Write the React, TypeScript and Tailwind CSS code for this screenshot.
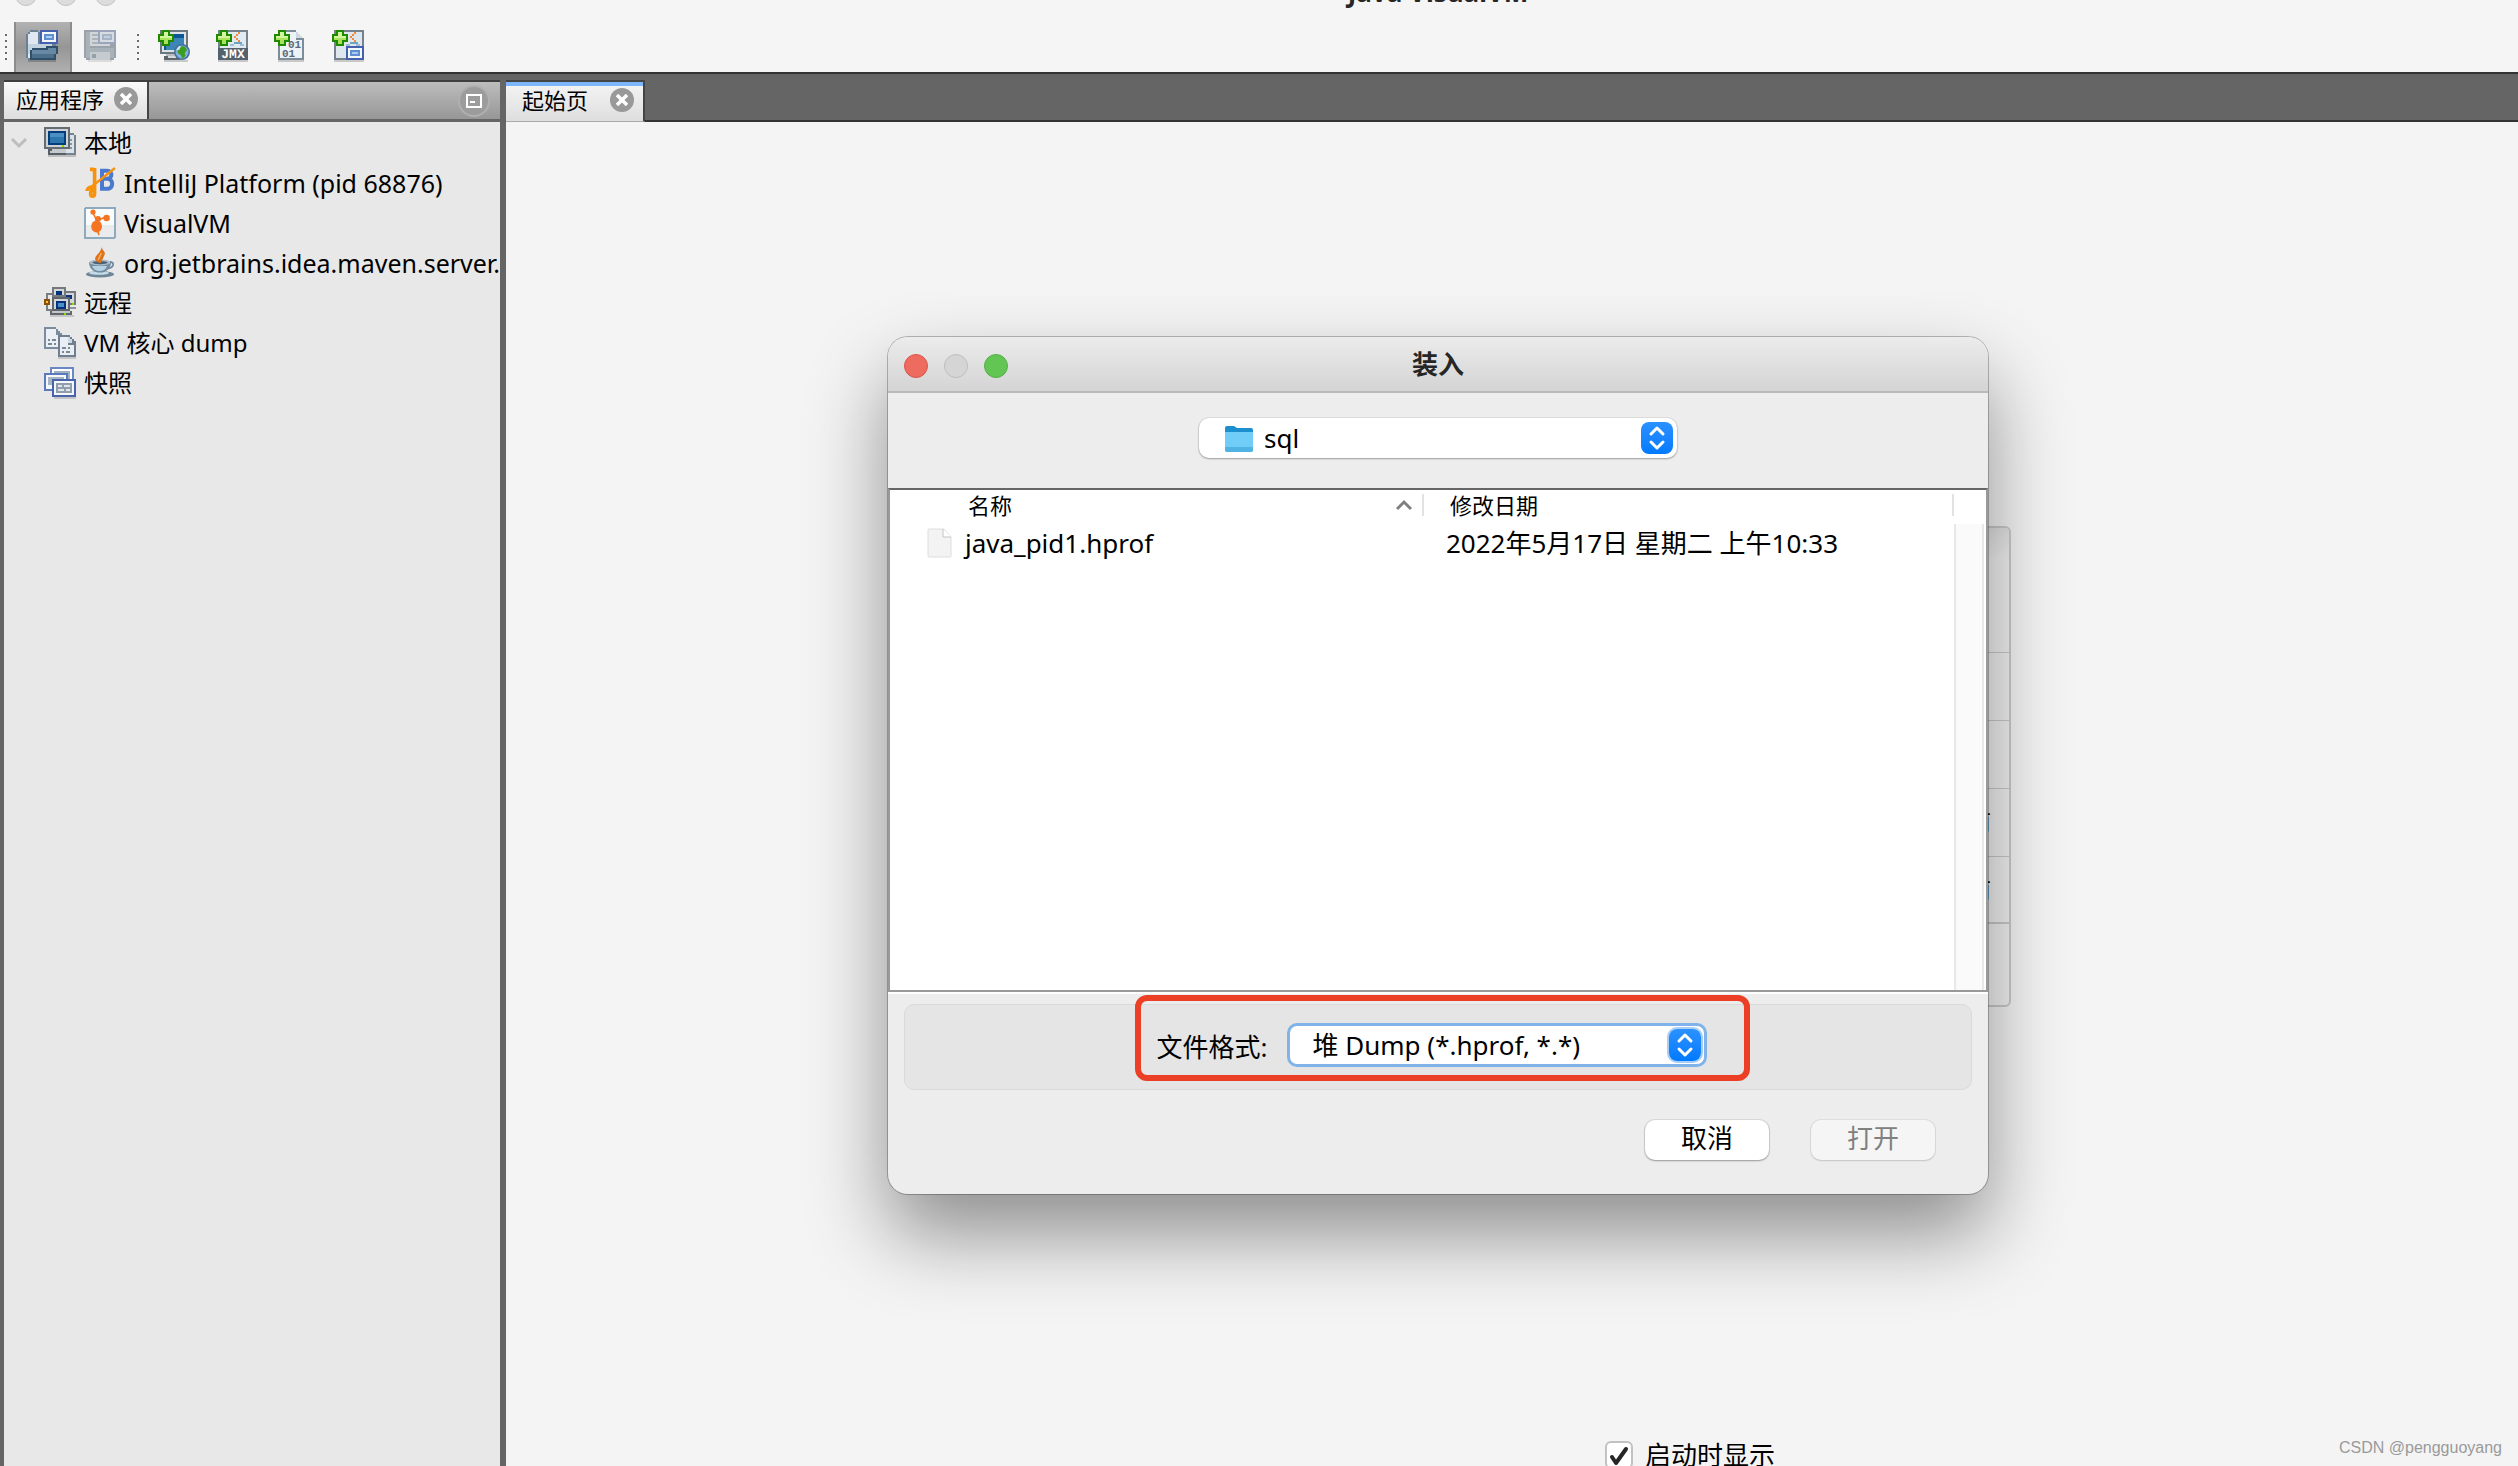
import React from 'react';

const LATIN = "font-['Noto_Sans','Noto_Sans_CJK_SC',sans-serif]";

function Icon({ children }: { children: React.ReactNode }) {
  return (
    <svg viewBox="0 0 16 16" className="size-8 shrink-0" shapeRendering="crispEdges" aria-hidden="true">
      {children}
    </svg>
  );
}

const Plus = () => (
  <>
    <path d="M2 0h4v2h2v4H6v2H2V6H0V2h2z" fill="#1f8a00" />
    <path d="M3 1h2v2h2v2H5v2H3V5H1V3h2z" fill="#a9e35c" />
    <path d="M3 1h2v2h2v1H1V3h2z" fill="#d3f5a0" />
  </>
);

const MiniWindow = ({ x, y }: { x: number; y: number }) => (
  <g>
    <rect x={x} y={y} width="9" height="7" fill="#4560ae" />
    <rect x={x + 1} y={y + 1} width="7" height="5" fill="#f4f8fd" />
    <rect x={x + 2} y={y + 2} width="5" height="3" fill="#5f8fd0" />
    <rect x={x + 3} y={y + 3} width="3" height="1" fill="#a9cdf0" />
  </g>
);

const OpenIcon = () => (
  <Icon>
    <rect x="1" y="15" width="14" height="1" fill="#000" opacity=".2" />
    <path d="M0 2h1V1h1V0h4v1h1v6h8v2h1v1h-1v4h-1v1H1v-1H0z" fill="#6b8193" />
    <path d="M1 2h1V1h4v6h6v1H2v6H1z" fill="#dfe8f0" />
    <path d="M1 7h12v2H3v3H1z" fill="#c3d2df" />
    <path d="M2 10h1V9h7V8h6v4h-1v3H2z" fill="#2f4f6a" />
    <path d="M3 10h8V9h4v3h-1v2H3z" fill="#6888a3" />
    <path d="M3 12h11v2H3z" fill="#4c6f8c" />
    <MiniWindow x={7} y={0} />
  </Icon>
);

const SaveIcon = () => (
  <Icon>
    <rect x="2" y="15" width="12" height="1" fill="#000" opacity=".1" />
    <path d="M0 0h16v14h-1v1H1v-1H0z" fill="#9aa3ab" />
    <path d="M1 1h2v8h12v5H1z" fill="#a9b2b9" />
    <rect x="3" y="1" width="10" height="7" fill="#d3d6d9" />
    <path d="M4 2h3v1H4zM4 4h3v1H4zM4 6h6v1H4z" fill="#adb3b8" />
    <rect x="3" y="11" width="10" height="4" fill="#c6cbcf" />
    <rect x="4" y="12" width="2" height="2" fill="#969fa6" />
    <rect x="7" y="0" width="9" height="7" fill="#9aa5bd" />
    <rect x="8" y="1" width="7" height="5" fill="#d8dce2" />
    <rect x="9" y="2" width="5" height="3" fill="#a5b3c6" />
    <rect x="10" y="3" width="3" height="1" fill="#c5d0dc" />
  </Icon>
);

const AddHostIcon = () => (
  <Icon>
    <rect x="3" y="15" width="12" height="1" fill="#000" opacity=".18" />
    <rect x="1" y="0" width="14" height="12" fill="#6d7880" />
    <rect x="2" y="1" width="12" height="10" fill="#dfe3e6" />
    <rect x="3" y="2" width="10" height="8" fill="#0c5796" />
    <path d="M6 4h7v6H4V8h2z" fill="#3b86b7" />
    <path d="M4 12h6v1H4z" fill="#b6bcc0" />
    <path d="M3 13h8v2H3z" fill="#5d666d" />
    <path d="M5 13h4v1H5z" fill="#d5d9dc" />
    <g shapeRendering="auto">
      <circle cx="12" cy="11" r="3.600" fill="#7fb2dd" stroke="#45709c" strokeWidth=".8" />
      <path d="M10 9.500l2-1.500 1.500.5 1 1.500-1.200 1.500.4 1.500-1.400 1.200-1-1.700-1.500-1z" fill="#3c9d1e" />
      <path d="M9.200 10l1.300-2 1 .3-1 1.700z" fill="#d7e8f5" />
    </g>
    <Plus />
  </Icon>
);

const Sprite = () => (
  <g fill="#f08a3c">
    <path d="M11 1h1v1h-1v1h-1v1h1v1h1v1h-1V5h-1V4H9V3h1V2h1z" />
    <path d="M9 6h4v1H9z" fill="#6da4c4" />
    <path d="M7 7h2v1H7zM12 7h2v1h-2z" fill="#9cc1d6" />
  </g>
);

const AddJmxIcon = () => (
  <Icon>
    <rect x="1" y="15" width="15" height="1" fill="#000" opacity=".18" />
    <rect x="1" y="0" width="15" height="15" fill="#75828e" />
    <rect x="2" y="1" width="13" height="13" fill="#e2eaf1" />
    <Sprite />
    <rect x="1" y="9" width="15" height="6" fill="#55616d" />
    <text x="8.500" y="14.200" textAnchor="middle" fontSize="6.500" fontWeight="700" fill="#fff" fontFamily="Liberation Mono, monospace" textRendering="geometricPrecision">JMX</text>
    <Plus />
  </Icon>
);

const AddDumpIcon = () => (
  <Icon>
    <rect x="2" y="15" width="13" height="1" fill="#000" opacity=".18" />
    <path d="M2 0h9v1h1v1h1v1h1v1h1v11H2z" fill="#7d8c99" />
    <path d="M3 1h8v4h3v9H3z" fill="#edf2f6" />
    <path d="M11 1h1v1h1v1h1v1h-3z" fill="#cfd9e1" />
    <text x="7" y="8.800" fontSize="5.500" fontWeight="700" fill="#5b6a78" fontFamily="Liberation Mono, monospace">01</text>
    <text x="4" y="13.300" fontSize="5.500" fontWeight="700" fill="#5b6a78" fontFamily="Liberation Mono, monospace">01</text>
    <Plus />
  </Icon>
);

const AddSnapshotIcon = () => (
  <Icon>
    <rect x="1" y="15" width="15" height="1" fill="#000" opacity=".18" />
    <rect x="1" y="0" width="15" height="15" fill="#75828e" />
    <rect x="2" y="1" width="13" height="13" fill="#dfe7ee" />
    <Sprite />
    <MiniWindow x={7} y={8} />
    <Plus />
  </Icon>
);

const LocalIcon = () => (
  <Icon>
    <path d="M2 14h14v1H2z" fill="#000" opacity=".18" />
    <path d="M10 3h5v1h1v10h-5z" fill="#76838f" />
    <path d="M11 4h4v9h-4z" fill="#dbe3ea" />
    <path d="M13 6h1v1h-1zM13 8h1v1h-1zM13 10h1v1h-1z" fill="#8896a3" />
    <path d="M2 11h9v3H2z" fill="#585f66" />
    <path d="M4 11h7v1H4zM3 12h8v1H3z" fill="#c5cacd" />
    <rect width="13" height="11" fill="#646b72" />
    <rect x="1" y="1" width="11" height="9" fill="#cfd2d4" />
    <rect x="2" y="2" width="9" height="7" fill="#043c7e" />
    <rect x="3" y="3" width="7" height="5" fill="#2d76ae" />
    <rect x="3" y="3" width="7" height="2" fill="#4a90c0" />
    <rect x="9" y="9" width="1" height="1" fill="#7fe000" />
  </Icon>
);

const JetBrainsIcon = () => (
  <Icon>
    <g shapeRendering="auto">
      <path d="M9 1.900h2.700a2 2 0 010 4H9.200h3a2.600 2.600 0 010 5H9zV11" stroke="#4a79cf" strokeWidth="2" fill="none" strokeLinejoin="miter" />
      <path d="M3 1.200h2M5.300 .5v12.700c0 1.800-2 1.800-2 0 0-1.500 1-1.600.5-2.700-.8-.8-2.300.2-2.300 1.500" stroke="#f7920f" strokeWidth="1.800" fill="none" />
      <path d="M3.500 10L8 6.500l7.500-6" stroke="#f7920f" strokeWidth="1.200" fill="none" />
    </g>
  </Icon>
);

const VisualVmIcon = () => (
  <Icon>
    <rect width="16" height="16" rx="1" fill="#8fa9bd" />
    <rect x="1" y="1" width="14" height="14" fill="#fafbfc" />
    <rect x="1" y="9" width="14" height="6" fill="#e9ebed" />
    <g shapeRendering="auto" fill="#f47421">
      <circle cx="4.500" cy="2.500" r="1.300" />
      <circle cx="11.300" cy="5.500" r="1.600" />
      <circle cx="7" cy="6" r="1.500" />
      <ellipse cx="6.300" cy="9.700" rx="2.700" ry="3" />
      <path d="M4.500 3l2 4M7 6.500l4-1.500M6.500 11l1 3" stroke="#f47421" strokeWidth=".8" />
    </g>
  </Icon>
);

const JavaIcon = () => (
  <Icon>
    <g shapeRendering="auto">
      <ellipse cx="8" cy="13.600" rx="7" ry="1.600" fill="#6e8598" />
      <ellipse cx="7.500" cy="13" rx="5" ry=".9" fill="#c5dbe8" />
      <path d="M2.500 7.500h11c0 3-2 5.300-5.500 5.300S2.500 10.500 2.500 7.500z" fill="#718ba0" />
      <path d="M4 9.500h7.500c-.5 1.700-1.800 2.500-3.700 2.500S4.500 11 4 9.500z" fill="#b5d2e2" />
      <ellipse cx="8" cy="7.700" rx="5.300" ry="1.500" fill="#a9bccb" />
      <ellipse cx="8" cy="7.800" rx="3.800" ry=".8" fill="#4c6072" />
      <path d="M13 7.500c2.500 0 2 3-1.200 3.200" stroke="#718ba0" fill="none" strokeWidth=".9" />
      <path d="M8.800 0c.6 2.500 2.500 2 1.200 4.500L8.500 8 6.500 7.500 5.500 6c0-2 3-3 3.300-6z" fill="#e0731a" />
      <path d="M8.700 3L7 6.500" stroke="#f8b36a" strokeWidth=".7" />
    </g>
  </Icon>
);

const RemoteIcon = () => (
  <Icon>
    <path d="M3 14h12v1H3z" fill="#000" opacity=".15" />
    <path d="M1 3h3v1H2v7h3v1H1z" fill="#777e84" />
    <rect x="4" y="0" width="7" height="5" fill="#74797d" />
    <rect x="5" y="1" width="5" height="3" fill="#d4d6d7" />
    <rect x="6" y="2" width="3" height="2" fill="#04317b" />
    <rect x="10" y="2" width="6" height="7" fill="#74797d" />
    <rect x="11" y="3" width="4" height="4" fill="#d4d6d7" />
    <rect x="11" y="4" width="3" height="2" fill="#0a357d" />
    <rect x="11" y="7" width="4" height="1" fill="#d4d6d7" />
    <rect x="14" y="8" width="1" height="1" fill="#7fe000" />
    <rect x="0" y="6" width="3" height="3" fill="#8a5200" />
    <rect x="1" y="7" width="1" height="1" fill="#ffbe4d" />
    <rect x="4" y="5" width="9" height="7" fill="#5f656a" />
    <rect x="5" y="6" width="7" height="5" fill="#d4d6d7" />
    <rect x="6" y="7" width="5" height="4" fill="#04317b" />
    <rect x="7" y="8" width="3" height="2" fill="#4a8fcb" />
    <rect x="3" y="12" width="11" height="2" fill="#62686d" />
    <rect x="4" y="12" width="9" height="1" fill="#c2c6c9" />
    <rect x="10" y="13" width="1" height="1" fill="#7fe000" />
    <rect x="13" y="10" width="3" height="1" fill="#8d9296" />
  </Icon>
);

const CoreDumpIcon = () => (
  <Icon>
    <path d="M0 0h6v1h1v1h1v1h1v8H0z" fill="#7b8ba0" />
    <path d="M1 1h5v3h2v6H1z" fill="#eaf0f5" />
    <path d="M2 6h1v1H2zM4 6h2v1H4zM2 8h2v1H2zM5 8h1v1H5z" fill="#7b8894" />
    <path d="M7 15h9v1H7z" fill="#000" opacity=".15" />
    <path d="M7 4h6v1h1v1h1v1h1v8H7z" fill="#6f7f90" />
    <path d="M8 5h4v4h3v5H8z" fill="#e8eef4" />
    <path d="M12 5h1v1h1v2h-2z" fill="#cdd8e1" />
    <path d="M9 10h2v1H9zM12 10h1v1h-1zM9 12h1v1H9zM11 12h2v1h-2z" fill="#7b8894" />
  </Icon>
);

const SnapshotsIcon = () => (
  <Icon>
    <rect x="3" y="0" width="12" height="9" fill="#6a88c6" />
    <rect x="4" y="1" width="10" height="7" fill="#fff" />
    <rect x="5" y="2" width="8" height="5" fill="#9fb0c4" />
    <rect x="0" y="3" width="12" height="9" fill="#5b7abd" />
    <rect x="1" y="4" width="10" height="7" fill="#f4f7fb" />
    <rect x="2" y="5" width="8" height="4" fill="#a7b4c2" />
    <rect x="5" y="15" width="11" height="1" fill="#000" opacity=".15" />
    <rect x="4" y="6" width="12" height="9" fill="#4764ab" />
    <rect x="5" y="7" width="10" height="7" fill="#f4f7fb" />
    <rect x="6" y="8" width="8" height="5" fill="#8f9dac" />
    <path d="M7 9h2v1H7zM10 9h3v1h-3zM7 11h3v1H7zM11 11h2v1h-2z" fill="#dfe6ec" />
  </Icon>
);

const ICONS = [
  { label: '添加远程主机', icon: <AddHostIcon /> },
  { label: '添加 JMX 连接', icon: <AddJmxIcon /> },
  { label: '添加 VM 核心 dump', icon: <AddDumpIcon /> },
  { label: '添加快照', icon: <AddSnapshotIcon /> },
];

function Grip() {
  return (
    <span className="flex w-[2px] flex-col gap-[4px]" aria-hidden="true">
      {[0, 1, 2, 3, 4].map((i) => (
        <i key={i} className="size-[2px] bg-[#6b6b6b]" />
      ))}
    </span>
  );
}

function CloseButton({ label }: { label: string }) {
  return (
    <button aria-label={label} className="flex size-6 items-center justify-center rounded-full bg-[#999]">
      <svg viewBox="0 0 12 12" className="size-3" stroke="#fff" strokeWidth="3.500">
        <path d="M1 1l10 10M11 1L1 11" />
      </svg>
    </button>
  );
}

type Row = { label: string; icon: React.ReactNode; child?: boolean; open?: boolean };

const TREE: Row[] = [
  { label: '本地', icon: <LocalIcon />, open: true },
  { label: 'IntelliJ Platform (pid 68876)', icon: <JetBrainsIcon />, child: true },
  { label: 'VisualVM', icon: <VisualVmIcon />, child: true },
  { label: 'org.jetbrains.idea.maven.server.', icon: <JavaIcon />, child: true },
  { label: '远程', icon: <RemoteIcon /> },
  { label: 'VM 核心 dump', icon: <CoreDumpIcon /> },
  { label: '快照', icon: <SnapshotsIcon /> },
];

function TreeRow({ row }: { row: Row }) {
  return (
    <li className={row.child ? 'flex h-10 items-center pl-20 text-[25px]' : 'flex h-10 items-center pl-[6px] text-[24px]'}>
      {!row.child && (
        <span className="flex w-[34px] shrink-0">
          {row.open && (
            <svg viewBox="0 0 18 12" className="h-3 w-[18px]" fill="none" stroke="#bdbdbd" strokeWidth="3">
              <path d="M2 2l7 7 7-7" />
            </svg>
          )}
        </span>
      )}
      {row.icon}
      <span className="ml-2 leading-8 whitespace-nowrap">{row.label}</span>
    </li>
  );
}

function Arrows({ className }: { className: string }) {
  return (
    <span className={className}>
      <svg viewBox="0 0 32 32" className="size-8" fill="none" stroke="#fff" strokeWidth="3" strokeLinecap="round" strokeLinejoin="round">
        <path d="M10 12l6-6 6 6M10 20l6 6 6-6" />
      </svg>
    </span>
  );
}

function LoadDialog() {
  return (
    <div
      role="dialog"
      aria-label="装入"
      className="flex w-[1100px] flex-col overflow-hidden rounded-[20px] bg-[#ededed] shadow-[0_0_0_1px_rgba(0,0,0,0.25),0_40px_80px_rgba(0,0,0,0.42)]"
    >
      <header className="grid h-14 grid-cols-[1fr_auto_1fr] items-center border-b-2 border-[#b9b9b9] bg-linear-to-b from-[#ececec] to-[#d4d4d4] px-4 pt-1">
        <div className="flex gap-4">
          <button aria-label="关闭" className="size-6 rounded-full border border-[#d9564a] bg-[#ed6b5f]" />
          <button aria-label="最小化" className="size-6 rounded-full border border-[#bdbdbd] bg-[#d5d5d5]" />
          <button aria-label="缩放" className="size-6 rounded-full border border-[#54b045] bg-[#62c554]" />
        </div>
        <h2 className="pb-1 text-[26px] leading-8 font-bold text-[#262626]">装入</h2>
      </header>

      <div className="flex h-[95px] items-start justify-center pt-[25px]">
        <div className="relative">
          <select
            aria-label="文件夹"
            className="h-10 w-[478px] appearance-none rounded-[10px] bg-white pl-[65px] text-[26px] leading-8 shadow-[0_0_0_1px_rgba(0,0,0,0.06),0_1px_2px_rgba(0,0,0,0.3)]"
          >
            <option>sql</option>
          </select>
          <svg viewBox="0 0 30 28" className="pointer-events-none absolute left-[25px] top-[7px] h-7 w-[30px]" aria-hidden="true">
            <path d="M1 3a2 2 0 012-2h7l3 2h14a2 2 0 012 2v20H1z" fill="#1c8fcf" />
            <path d="M1 7h28v18a2 2 0 01-2 2H3a2 2 0 01-2-2z" fill="#70cdf8" />
            <path d="M1 22h28v3a2 2 0 01-2 2H3a2 2 0 01-2-2z" fill="#4fb3e3" />
          </svg>
          <Arrows className="pointer-events-none absolute right-1 top-1 size-8 rounded-[8px] bg-linear-to-b from-[#2a91ff] to-[#007aff]" />
        </div>
      </div>

      <div className="flex h-[504px] items-start border-2 border-[#999] border-t-[#666] bg-white pr-[2px] shadow-[0_2px_0_white]">
        <table className="grow table-fixed border-collapse text-left">
          <colgroup>
            <col className="w-[534px]" />
            <col />
          </colgroup>
          <thead>
            <tr className="h-[34px] text-[22px] leading-[22px]">
              <th className="p-0 pb-1 font-normal">
                <span className="flex items-center justify-between border-r-2 border-[#e2e2e2] pl-[78px] pr-[10px]">
                  名称
                  <svg viewBox="0 0 16 12" className="h-3 w-4" fill="none" stroke="#808080" strokeWidth="3">
                    <path d="M1 10l7-7 7 7" />
                  </svg>
                </span>
              </th>
              <th className="p-0 pb-1 font-normal">
                <span className="block border-r-2 border-[#e2e2e2] pl-[26px]">修改日期</span>
              </th>
            </tr>
          </thead>
          <tbody>
            <tr className="h-[38px] text-[26px] leading-8">
              <td className="p-0">
                <span className="flex items-center pl-[37px]">
                  <svg viewBox="0 0 26 32" className="mr-3 h-8 w-[26px]" aria-hidden="true">
                    <path d="M1 3a1 1 0 011-1h15l7 8v19a1 1 0 01-1 1H2a1 1 0 01-1-1z" fill="#f3f3f3" stroke="#dedede" />
                    <path d="M16 2v8h8" fill="#fff" stroke="#c4c4c4" />
                  </svg>
                  java_pid1.hprof
                </span>
              </td>
              <td className="p-0 pl-[22px]">2022年5月17日 星期二 上午10:33</td>
            </tr>
          </tbody>
        </table>
        <div className="mt-[34px] w-[30px] self-stretch border-x-2 border-[#e8e8e8] bg-[#fafafa]" />
      </div>

      <div className="mx-4 mt-3 flex h-[86px] justify-center rounded-[10px] border border-[#dadada] bg-[#e5e5e5]">
        <div className="relative flex items-center gap-5 pr-3">
          <div className="pointer-events-none absolute -left-[22px] -right-[31px] -top-[10px] h-[86px] rounded-[12px] border-[6px] border-[#eb4026]" />
          <label htmlFor="format" className="text-[26px] leading-8">文件格式:</label>
          <div className="relative -mt-1">
            <select
              id="format"
              className="h-11 w-[420px] appearance-none rounded-[10px] border-[3px] border-[#7fb3ea] bg-white pl-[22px] text-[26px] leading-8"
            >
              <option>堆 Dump (*.hprof, *.*)</option>
            </select>
            <Arrows className="pointer-events-none absolute right-[6px] top-[6px] size-8 rounded-[8px] bg-linear-to-b from-[#2a91ff] to-[#007aff] shadow-[0_0_0_2px_#a9cdf5]" />
          </div>
        </div>
      </div>

      <footer className="flex justify-end gap-[42px] px-[53px] pt-[30px] pb-[34px]">
        <button className="h-10 w-[124px] rounded-[10px] bg-white pb-1 text-[26px] leading-8 shadow-[0_0_0_1px_rgba(0,0,0,0.08),0_1px_2px_rgba(0,0,0,0.3)]">取消</button>
        <button disabled className="h-10 w-[124px] rounded-[10px] bg-[#f5f5f5] pb-1 text-[26px] leading-8 text-[#808080] shadow-[0_0_0_1px_rgba(0,0,0,0.06),0_1px_2px_rgba(0,0,0,0.12)]">打开</button>
      </footer>
    </div>
  );
}

export default function App() {
  return (
    <div className={`relative flex h-screen flex-col overflow-hidden bg-[#f5f5f5] text-[24px] leading-8 text-black ${LATIN}`}>
      <header className="relative flex h-[22px] shrink-0 items-start overflow-hidden pl-[358px]">
        <div className="absolute -top-4 left-[15px] flex gap-[18px]">
          {['关闭', '最小化', '缩放'].map((l) => (
            <button key={l} aria-label={l} className="size-[22px] rounded-full border border-[#c4c4c4] bg-[#dcdcdc]" />
          ))}
        </div>
        <h1 className="-mt-6 flex-1 text-center text-[26px] leading-8 font-bold text-[#262626]">Java VisualVM</h1>
      </header>

      <nav className="flex h-[50px] shrink-0 items-stretch" aria-label="工具栏">
        <div className="flex w-[14px] items-center pl-[5px]"><Grip /></div>
        <button aria-label="装入" className="flex w-[58px] items-start border-x-2 border-[#8c8c8c] bg-linear-to-b from-[#b2b2b2] via-[#969696] to-[#b0b0b0] pt-2 pl-[10px]"><OpenIcon /></button>
        <button aria-label="保存" className="flex w-[58px] items-start pt-2 pl-3"><SaveIcon /></button>
        <div className="flex w-[14px] items-center pl-[7px]"><Grip /></div>
        {ICONS.map((i) => (
          <button key={i.label} aria-label={i.label} className="flex w-[58px] items-start pt-2 pl-[14px]">{i.icon}</button>
        ))}
      </nav>

      <div className="flex min-h-0 flex-1 border-t-2 border-[#333] bg-[#656565] pl-1 pt-[6px]">
        <aside className="flex w-[496px] shrink-0 flex-col overflow-hidden">
          <div className="flex h-[42px] shrink-0 border-t-2 border-b-3 border-[#3f3f3f] border-b-[#656565]">
            <div className="flex w-[145px] items-center gap-[10px] border-r-2 border-[#444] bg-linear-to-b from-[#fafafa] to-[#dedede] pb-[3px] pl-3 text-[22px] leading-8">
              应用程序
              <CloseButton label="关闭应用程序" />
            </div>
            <div className="flex flex-1 items-center justify-end bg-linear-to-b from-[#bdbdbd] to-[#979797] pr-[10px]">
              <button aria-label="最小化窗口" className="flex size-8 items-center justify-center rounded-full border-2 border-[#b0b0b0] bg-[#9c9c9c]">
                <svg viewBox="0 0 16 14" className="h-[14px] w-4" fill="none" stroke="#fff" strokeWidth="2">
                  <path d="M1 1h14v12H1zM4 8h5" />
                </svg>
              </button>
            </div>
          </div>
          <ul className="flex-1 bg-[#e8e8e8] pt-px">
            {TREE.map((r) => (
              <TreeRow key={r.label} row={r} />
            ))}
          </ul>
        </aside>

        <main className="ml-[6px] flex min-w-0 flex-1 flex-col">
          <div className="flex h-[42px] shrink-0">
            <div className="flex w-[139px] items-center gap-[22px] border-t-2 border-r-2 border-b border-[#444] border-b-[#aaa] bg-linear-to-b from-[#f5f5f5] to-[#dedede] pb-[3px] pl-4 text-[22px] leading-8 shadow-[inset_0_4px_0_#7db7fb]">
              起始页
              <CloseButton label="关闭起始页" />
            </div>
            <div className="flex-1 border-b-2 border-[#333]" />
          </div>
          <div className="flex min-h-0 flex-1 flex-col items-center overflow-hidden bg-[#f4f4f4] pl-[356px] pt-[404px]">
            <section className="flex w-[642px] shrink-0 flex-col overflow-hidden rounded-[6px] border-2 border-[#cbcbcb] text-right">
              <div className="h-[124px] bg-linear-to-b from-[#e4e4e4] to-[#f4f4f4] to-25%" />
              <div className="h-[68px] border-t border-[#cbcbcb]" />
              <div className="h-[68px] border-t border-[#cbcbcb]" />
              <div className="h-[68px] border-t border-[#cbcbcb] pr-[18px] pt-[16px]">前</div>
              <div className="h-[66px] border-t border-[#cbcbcb] pr-[18px] pt-[16px]">前</div>
              <div className="h-[83px] border-t-2 border-[#cbcbcb]" />
            </section>
            <label className="mt-[432px] flex shrink-0 items-center gap-3 text-[26px] leading-8">
              <span className="relative flex size-[28px]">
                <input type="checkbox" defaultChecked className="size-[28px] appearance-none rounded-[6px] border-2 border-[#c2c2c2] bg-white" />
                <svg viewBox="0 0 28 28" className="pointer-events-none absolute inset-0" fill="none" stroke="#262626" strokeWidth="4" strokeLinecap="round" strokeLinejoin="round">
                  <path d="M7 16l4 6L21 8" />
                </svg>
              </span>
              启动时显示
            </label>
          </div>
        </main>
      </div>

      <div className="absolute inset-x-0 top-[337px] flex justify-center pl-[358px]">
        <LoadDialog />
      </div>
      <p className="absolute right-4 bottom-[6px] font-['Liberation_Sans',sans-serif] text-[16px] leading-6 text-[#9a9a9a]">CSDN @pengguoyang</p>
    </div>
  );
}
